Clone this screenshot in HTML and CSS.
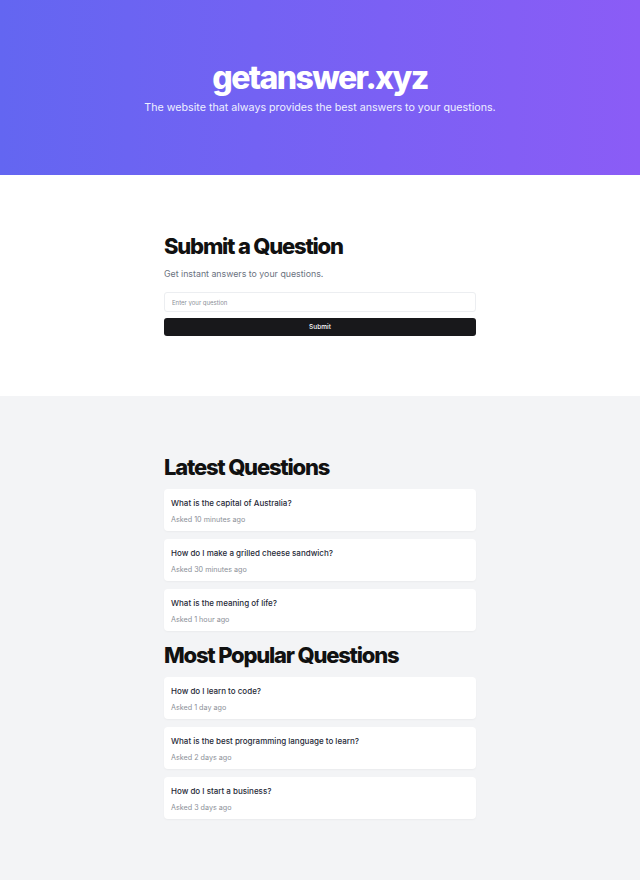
FILE: index.html
```html
<!DOCTYPE html>
<html lang="en">
<head>
<meta charset="utf-8">
<title>getanswer.xyz</title>
<link rel="stylesheet" href="styles.css">
</head>
<body>
<header class="hero">
  <h1 class="hero-title">getanswer.xyz</h1>
  <p class="hero-sub">The website that always provides the best answers to your questions.</p>
</header>

<section class="submit">
  <div class="container">
    <h2 class="heading">Submit a Question</h2>
    <p class="submit-sub">Get instant answers to your questions.</p>
    <form class="form">
      <input class="input" type="text" placeholder="Enter your question">
      <button class="button" type="button">Submit</button>
    </form>
  </div>
</section>

<section class="lists">
  <div class="container">
    <h2 class="heading">Latest Questions</h2>
    <ul class="cards">
      <li class="card"><p class="q">What is the capital of Australia?</p><p class="meta">Asked 10 minutes ago</p></li>
      <li class="card"><p class="q">How do I make a grilled cheese sandwich?</p><p class="meta">Asked 30 minutes ago</p></li>
      <li class="card"><p class="q">What is the meaning of life?</p><p class="meta">Asked 1 hour ago</p></li>
    </ul>
    <h2 class="heading heading-second">Most Popular Questions</h2>
    <ul class="cards">
      <li class="card"><p class="q">How do I learn to code?</p><p class="meta">Asked 1 day ago</p></li>
      <li class="card"><p class="q">What is the best programming language to learn?</p><p class="meta">Asked 2 days ago</p></li>
      <li class="card"><p class="q">How do I start a business?</p><p class="meta">Asked 3 days ago</p></li>
    </ul>
  </div>
</section>
</body>
</html>
```

FILE: styles.css
```css
* { box-sizing: border-box; }
html, body { margin: 0; padding: 0; }
body {
  font-family: Inter, "Noto Sans", "Liberation Sans", sans-serif;
  background: #f3f4f6;
  color: #111827;
}
p, h1, h2, ul { margin: 0; padding: 0; }

.hero {
  background: linear-gradient(90deg, #6366f1 0%, #8b5cf6 100%);
  padding: 60px 0 59px;
  text-align: center;
  color: #fff;
}
.hero-title {
  font-size: 32px;
  line-height: 36px;
  font-weight: 800;
  letter-spacing: -0.05em;
}
.hero-sub {
  margin-top: 4px;
  font-size: 10.7px;
  line-height: 16px;
  color: #eef0ff;
}

.container {
  width: 312px;
  margin: 0 auto;
}

.submit {
  background: #fff;
  padding: 57px 0 60px;
}
.heading {
  font-size: 22px;
  line-height: 28px;
  font-weight: 800;
  letter-spacing: -0.055em;
  color: #111111;
}
.submit-sub {
  margin-top: 7px;
  font-size: 8.8px;
  line-height: 14px;
  color: #6b7280;
}
.form {
  margin-top: 11px;
  display: flex;
  flex-direction: column;
  gap: 6px;
}
.input {
  height: 20px;
  border: 1px solid #eceef1;
  border-radius: 3px;
  padding: 0 7px;
  font-family: inherit;
  font-size: 6px;
  background: #fff;
  outline: none;
}
.input::placeholder { color: #8b8f97; }
.button {
  height: 18px;
  border: 0;
  border-radius: 3px;
  background: #18181b;
  color: #ffffff;
  font-family: inherit;
  font-size: 6.5px;
  font-weight: 500;
}

.lists {
  padding: 57px 0 60px;
}
.heading-second { margin-top: 10px; }
.cards {
  list-style: none;
  margin-top: 8px;
  display: flex;
  flex-direction: column;
  gap: 8px;
}
.card {
  background: #fff;
  border-radius: 4px;
  box-shadow: 0 1px 2px rgba(0,0,0,0.04);
  padding: 8px 7px 7px;
  height: 42px;
}
.q {
  font-size: 8px;
  line-height: 12px;
  font-weight: 500;
  color: #1f2937;
}
.meta {
  margin-top: 5px;
  font-size: 7.2px;
  line-height: 11px;
  color: #8b8f97;
}
```
